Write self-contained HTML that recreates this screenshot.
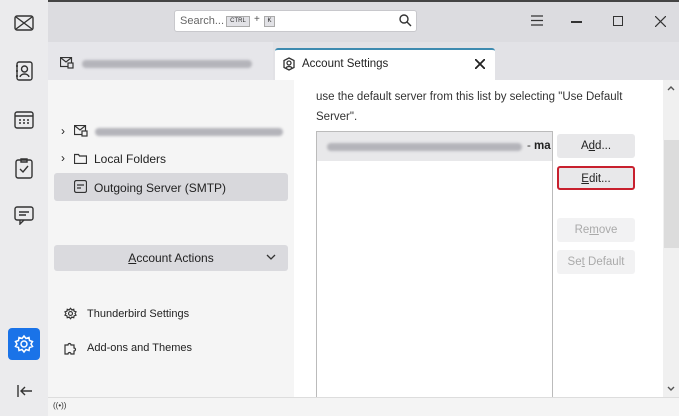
<!DOCTYPE html>
<html><head><style>
*{box-sizing:border-box;margin:0;padding:0}
body{width:679px;height:416px;overflow:hidden;font-family:"Liberation Sans",sans-serif;font-size:12px;color:#222;position:relative;background:#f4f4f4}
.a{position:absolute}
.blur{background:#b4b4ba;border-radius:4px;filter:blur(1.2px)}
.btn{position:absolute;left:557px;width:78px;height:24px;background:#e8e8ea;border-radius:3px;text-align:center;line-height:24px;font-size:11.5px;color:#222}
.btn.dis{background:#f2f2f3;color:#aaa}
svg{position:absolute}
</style></head><body>
<div class="a" style="left:0;top:0;width:48px;height:416px;background:#ebebed"></div>
<div class="a" style="left:48px;top:0;width:631px;height:2px;background:#444"></div>
<svg style="left:14px;top:14px" width="20" height="18" viewBox="0 0 20 18" fill="none" stroke="#333" stroke-width="1.4"><rect x="1" y="2" width="18" height="14" rx="2"/><path d="M2 3l16 12M18 3L2 15"/></svg>
<svg style="left:15px;top:61px" width="18" height="20" viewBox="0 0 18 20" fill="none" stroke="#333" stroke-width="1.4"><rect x="2" y="1" width="15" height="18" rx="2"/><circle cx="9.5" cy="8" r="3"/><path d="M5 16c1-4 8-4 9 0M1 5h2M1 10h2M1 15h2"/></svg>
<svg style="left:14px;top:110px" width="20" height="20" viewBox="0 0 20 20" fill="none" stroke="#333" stroke-width="1.4"><rect x="1" y="2" width="18" height="16" rx="2"/><path d="M1 6h18M5 10h2M9 10h2M13 10h2M5 13h2M9 13h2M13 13h2"/></svg>
<svg style="left:15px;top:157px" width="18" height="22" viewBox="0 0 18 22" fill="none" stroke="#333" stroke-width="1.4"><rect x="1" y="3" width="16" height="18" rx="2"/><path d="M6 2h6v3H6zM5 12l3 3 5-6"/></svg>
<svg style="left:14px;top:205px" width="20" height="20" viewBox="0 0 20 20" fill="none" stroke="#333" stroke-width="1.4"><rect x="1" y="2" width="18" height="13" rx="2"/><path d="M6 15v4l4-4M5 7h10M5 10h7"/></svg>
<div class="a" style="left:8px;top:328px;width:32px;height:32px;background:#1a73e8;border-radius:4px"></div>
<svg style="left:14px;top:334px" width="20" height="20" viewBox="0 0 20 20" fill="none" stroke="#fff" stroke-width="1.5"><circle cx="10" cy="10" r="3"/><path d="M10 2l2 2.5 3-1 .5 3 3 1-1.5 2.5 1.5 2.5-3 1-.5 3-3-1-2 2.5-2-2.5-3 1-.5-3-3-1L3 10 1.5 7.5l3-1 .5-3 3 1z"/></svg>
<svg style="left:16px;top:383px" width="18" height="16" viewBox="0 0 18 16" fill="none" stroke="#333" stroke-width="1.4"><path d="M2 2v12M16 8H5M9 4L5 8l4 4"/></svg>
<div class="a" style="left:48px;top:2px;width:631px;height:40px;background:#dcdce0"></div>
<div class="a" style="left:174px;top:10px;width:243px;height:22px;background:#fff;border:1px solid #c8c8cc;border-radius:3px"></div>
<div class="a" style="left:180px;top:15px;font-size:11px;color:#666">Search...</div>
<div class="a" style="left:226px;top:16px;width:24px;height:11px;background:#e2e2e6;border:1px solid #aaa;font-size:6px;line-height:9px;text-align:center;color:#333">CTRL</div>
<div class="a" style="left:254px;top:14px;font-size:10px;color:#555">+</div>
<div class="a" style="left:264px;top:16px;width:11px;height:11px;background:#e2e2e6;border:1px solid #aaa;font-size:6px;line-height:9px;text-align:center">K</div>
<svg style="left:399px;top:14px" width="13" height="13" viewBox="0 0 13 13" fill="none" stroke="#333" stroke-width="1.4"><circle cx="5" cy="5" r="4"/><path d="M8 8l4 4"/></svg>
<svg style="left:531px;top:15px" width="12" height="11" stroke="#333" stroke-width="1.3"><path d="M0 1h12M0 5.5h12M0 10h12"/></svg>
<div class="a" style="left:571px;top:21px;width:11px;height:1.5px;background:#333"></div>
<div class="a" style="left:613px;top:16px;width:10px;height:10px;border:1.4px solid #333"></div>
<svg style="left:655px;top:16px" width="11" height="11" stroke="#333" stroke-width="1.2"><path d="M0 0l11 11M11 0L0 11"/></svg>
<div class="a" style="left:48px;top:42px;width:631px;height:38px;background:#e2e2e6"></div>
<div class="a" style="left:48px;top:42px;width:225px;height:38px;background:#e6e6ea"></div>
<svg style="left:60px;top:57px" width="14" height="12" viewBox="0 0 14 12" fill="none" stroke="#333" stroke-width="1.2"><rect x=".5" y=".5" width="11" height="9"/><path d="M1 1l5 4 5-4"/><rect x="8" y="6" width="5" height="5" fill="#e6e6ea"/></svg>
<div class="a blur" style="left:82px;top:60px;width:170px;height:8px"></div>
<div class="a" style="left:275px;top:48px;width:220px;height:32px;background:#fff;border-top:2px solid #3e8bb0;border-radius:3px 3px 0 0"></div>
<svg style="left:282px;top:57px" width="14" height="14" viewBox="0 0 14 14" fill="none" stroke="#333" stroke-width="1.3"><path d="M7 1l5 2.5v7L7 13 2 10.5v-7z"/><circle cx="7" cy="6" r="2"/><path d="M4 11c1-2 5-2 6 0"/></svg>
<div class="a" style="left:302px;top:58px;font-size:11.5px">Account Settings</div>
<svg style="left:475px;top:59px" width="10" height="10" stroke="#222" stroke-width="1.8"><path d="M0 0l10 10M10 0L0 10"/></svg>
<div class="a" style="left:48px;top:80px;width:246px;height:317px;background:#f5f5f5"></div>
<div class="a" style="left:61px;top:124px;font-size:12px">›</div>
<svg style="left:74px;top:125px" width="14" height="12" viewBox="0 0 14 12" fill="none" stroke="#333" stroke-width="1.2"><rect x=".5" y=".5" width="11" height="9"/><path d="M1 1l5 4 5-4"/><rect x="8" y="6" width="5" height="5" fill="#f5f5f5"/></svg>
<div class="a blur" style="left:95px;top:128px;width:188px;height:8px"></div>
<div class="a" style="left:61px;top:151px;font-size:12px">›</div>
<svg style="left:74px;top:153px" width="13" height="11" viewBox="0 0 13 11" fill="none" stroke="#333" stroke-width="1.2"><path d="M.5 1.5h4l1 1.5h7v7.5H.5z"/></svg>
<div class="a" style="left:94px;top:152px;font-size:12px">Local Folders</div>
<div class="a" style="left:54px;top:173px;width:234px;height:28px;background:#d8d8dc;border-radius:3px"></div>
<svg style="left:74px;top:180px" width="13" height="13" viewBox="0 0 13 13" fill="none" stroke="#333" stroke-width="1.2"><rect x=".5" y=".5" width="12" height="12" rx="2"/><path d="M3 5h7M3 8h4"/></svg>
<div class="a" style="left:94px;top:181px;font-size:12px">Outgoing Server (SMTP)</div>
<div class="a" style="left:54px;top:245px;width:234px;height:26px;background:#dadade;border-radius:3px;text-align:center;line-height:26px;font-size:12px"><u>A</u>ccount Actions</div>
<svg style="left:266px;top:254px" width="10" height="7" fill="none" stroke="#333" stroke-width="1.3"><path d="M1 1l4 4 4-4"/></svg>
<svg style="left:64px;top:307px" width="13" height="13" viewBox="0 0 20 20" fill="none" stroke="#333" stroke-width="1.8"><circle cx="10" cy="10" r="3"/><path d="M10 2l2 2.5 3-1 .5 3 3 1-1.5 2.5 1.5 2.5-3 1-.5 3-3-1-2 2.5-2-2.5-3 1-.5-3-3-1L3 10 1.5 7.5l3-1 .5-3 3 1z"/></svg>
<div class="a" style="left:87px;top:308px;font-size:11px">Thunderbird Settings</div>
<svg style="left:64px;top:341px" width="14" height="14" viewBox="0 0 14 14" fill="none" stroke="#333" stroke-width="1.2"><path d="M1 4h3a1.5 1.5 0 013 0h3v3a1.5 1.5 0 010 3v3H7a1.5 1.5 0 00-3 0H1z"/></svg>
<div class="a" style="left:87px;top:342px;font-size:11px">Add-ons and Themes</div>
<div class="a" style="left:294px;top:80px;width:369px;height:317px;background:#fff"></div>
<div class="a" style="left:316px;top:87px;font-size:11.5px;line-height:20px;color:#333">use the default server from this list by selecting "Use Default<br>Server".</div>
<div class="a" style="left:316px;top:131px;width:237px;height:266px;border:1px solid #bbb;border-bottom:none;background:#fff"></div>
<div class="a" style="left:317px;top:132px;width:235px;height:29px;background:#e8e8ea"></div>
<div class="a blur" style="left:327px;top:143px;width:195px;height:8px"></div>
<div class="a" style="left:527px;top:140px;font-size:11.5px"><span style="color:#333">-</span> <b>ma</b></div>
<div class="btn" style="top:134px">A<u>d</u>d...</div>
<div class="btn" style="top:166px;border:2px solid #c8202e;line-height:22px"><u>E</u>dit...</div>
<div class="btn dis" style="top:218px">Re<u>m</u>ove</div>
<div class="btn dis" style="top:250px">Se<u>t</u> Default</div>
<div class="a" style="left:663px;top:80px;width:16px;height:317px;background:#f0f0f0"></div>
<div class="a" style="left:664px;top:140px;width:15px;height:108px;background:#dcdcdc"></div>
<svg style="left:667px;top:86px" width="8" height="5" fill="none" stroke="#555" stroke-width="1.4"><path d="M1 4l3-3 3 3"/></svg>
<svg style="left:667px;top:386px" width="8" height="5" fill="none" stroke="#555" stroke-width="1.4"><path d="M1 1l3 3 3-3"/></svg>
<div class="a" style="left:48px;top:397px;width:631px;height:19px;background:#f4f4f4;border-top:1px solid #ddd"></div>
<div class="a" style="left:53px;top:401px;font-size:8px;color:#333">((•))</div>
</body></html>
